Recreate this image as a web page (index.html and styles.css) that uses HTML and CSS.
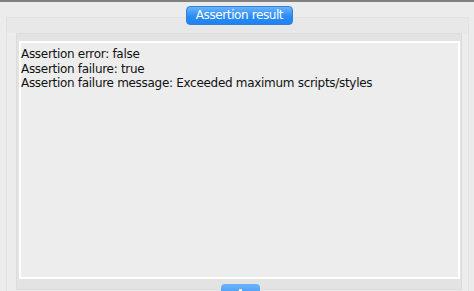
FILE: index.html
```html
<!DOCTYPE html>
<html>
<head>
<meta charset="utf-8">
<link rel="stylesheet" href="styles.css">
</head>
<body>
<div class="topbar"></div>
<div class="window">
  <div class="panel">
    <div class="tab">Assertion result</div>
    <div class="group">
      <div class="textarea">
        <div class="line">Assertion error: false</div>
        <div class="line">Assertion failure: true</div>
        <div class="line">Assertion failure message: Exceeded maximum scripts/styles</div>
      </div>
    </div>
    <div class="bottom-btn"><span class="mark"></span></div>
  </div>
</div>
</body>
</html>
```
FILE: styles.css
```css
html, body {
  margin: 0;
  padding: 0;
  width: 474px;
  height: 291px;
  overflow: hidden;
  background: #ececec;
  font-family: "DejaVu Sans", "Open Sans", sans-serif;
}
.topbar {
  height: 2px;
  background: #818181;
}
.window {
  padding: 0 5px 0 6px;
  height: 289px;
  box-sizing: border-box;
  overflow: hidden;
}
.panel {
  position: relative;
  margin-top: 15px;
  height: 274px;
  border-left: 1px solid #e2e2e2;
  border-top: 1px solid #e2e2e2;
  border-right: 1px solid #e2e2e2;
  background: linear-gradient(#e8e8e8, #e8e8e8 15px, #ececec 15px);
  padding: 15px 6px 0 9px;
  box-sizing: border-box;
}
.tab {
  position: absolute;
  left: 179px;
  top: -12px;
  width: 107px;
  height: 19px;
  box-sizing: border-box;
  border: 1px solid #2f7fe0;
  border-radius: 4px;
  background: linear-gradient(#6cb3fa, #2b8cf4 55%, #1f82f2);
  color: #fff;
  font-size: 12px;
  line-height: 17px;
  text-align: center;
  letter-spacing: -0.4px;
}
.group {
  height: 257px;
  background: #e3e3e3;
  border: 1px solid #dcdcdc;
  padding: 7px 1px 0 2px;
  box-sizing: border-box;
}
.textarea {
  height: 238px;
  background: #ededed;
  border: 2px solid #ffffff;
  box-sizing: border-box;
  padding: 4px 0 0 0;
  font-size: 12px;
  line-height: 14.5px;
  letter-spacing: -0.3px;
  color: #111;
}
.bottom-btn {
  position: absolute;
  left: 214px;
  top: 266px;
  width: 39px;
  height: 19px;
  border-radius: 4px;
  background: linear-gradient(#6cb3fa, #2b8cf4);
  display: flex;
  justify-content: center;
}
.mark {
  margin-top: 5px;
  width: 3px;
  height: 4px;
  background: #e8f2ff;
}
```
